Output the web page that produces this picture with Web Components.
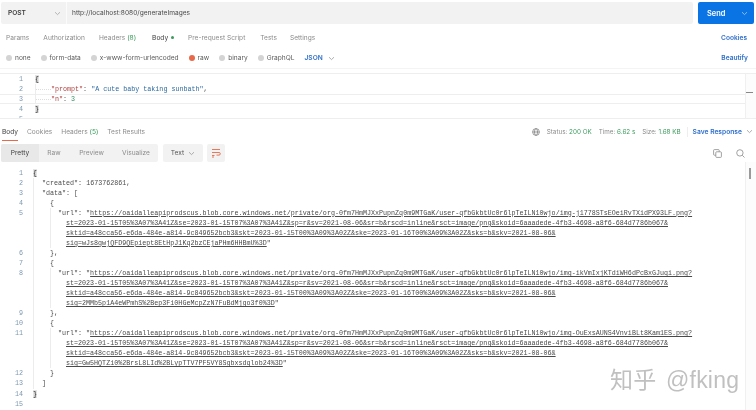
<!DOCTYPE html>
<html>
<head>
<meta charset="utf-8">
<title>Postman</title>
<style>
  html, body { margin: 0; background: #fff; }
  body { width: 756px; height: 410px; overflow: hidden; position: relative; font: 6.5px Inter, "Liberation Sans", sans-serif; color: #555; filter: blur(0.42px); }
  code-line a { color: #4a4a4a; text-decoration: underline; }
</style>
</head>
<body>
<request-bar method="POST" url="http://localhost:8080/generateImages"></request-bar>

<tab-row style="height:20px;margin-top:4px">
  <tab-item style="margin-left:6px">Params</tab-item>
  <tab-item style="margin-left:14px">Authorization</tab-item>
  <tab-item style="margin-left:14px">Headers <span style="color:#3a9a5b">(8)</span></tab-item>
  <tab-item style="margin-left:16px" active>Body <status-dot></status-dot></tab-item>
  <tab-item style="margin-left:14px">Pre-request Script</tab-item>
  <tab-item style="margin-left:15px">Tests</tab-item>
  <tab-item style="margin-left:13px">Settings</tab-item>
  <link-text slot="end" style="margin-right:9px">Cookies</link-text>
</tab-row>

<tab-row style="height:20px;border-bottom:1px solid #f4f4f4">
  <radio-item style="margin-left:6px">none</radio-item>
  <radio-item style="margin-left:10px">form-data</radio-item>
  <radio-item style="margin-left:10px">x-www-form-urlencoded</radio-item>
  <radio-item style="margin-left:10px" checked>raw</radio-item>
  <radio-item style="margin-left:10px">binary</radio-item>
  <radio-item style="margin-left:10px">GraphQL</radio-item>
  <link-text style="margin-left:10px">JSON <chevron-icon></chevron-icon></link-text>
  <link-text slot="end" style="margin-right:8px">Beautify</link-text>
</tab-row>

<code-panel id="req" style="height:46px;margin-top:4px;border-top:1px solid #eee;border-bottom:1px solid #eee;--code-gap:12px;--thumb-top:18px;--thumb-width:7px;--thumb-height:1px;--thumb-left:0px;--thumb-color:#888">
  <code-line n="1"><b>{</b></code-line>
  <code-line n="2" guides="1"><guide-mark></guide-mark><span class="k">"prompt"</span>: <span class="s">"A cute baby taking sunbath"</span>,</code-line>
  <code-line n="3" guides="1" active><guide-mark></guide-mark><span class="k">"n"</span>: <span class="v">3</span></code-line>
  <code-line n="4"><b>}</b></code-line>
  <code-line n="5"></code-line>
</code-panel>

<response-head></response-head>
<response-toolbar></response-toolbar>

<code-panel id="res" style="height:248px;padding-top:5.5px;--thumb-top:6px;--thumb-width:2px;--thumb-height:11px;--thumb-left:3px;--thumb-color:#9a9a9a">
  <code-line n="1"><b>{</b></code-line>
  <code-line n="2" indent="1" guides="1">"created": 1673762861,</code-line>
  <code-line n="3" indent="1" guides="1">"data": [</code-line>
  <code-line n="4" indent="2" guides="1">{</code-line>
  <code-line n="5" indent="3" guides="2">"url": "<a>https://oaidalleapiprodscus.blob.core.windows.net/private/org-0fm7HmMJXxPupnZq0m9MTGaK/user-qfbGkbtUc0r6lpTeILN10wjo/img-j1778STsEOeiRvTXidPX93LF.png?</a><span class="w"><a>st=2023-01-15T05%3A07%3A41Z&amp;se=2023-01-15T07%3A07%3A41Z&amp;sp=r&amp;sv=2021-08-06&amp;sr=b&amp;rscd=inline&amp;rsct=image/png&amp;skoid=6aaadede-4fb3-4698-a8f6-684d7786b067&amp;</a></span><span class="w"><a>sktid=a48cca56-e6da-484e-a814-9c849652bcb3&amp;skt=2023-01-15T00%3A09%3A02Z&amp;ske=2023-01-16T00%3A09%3A02Z&amp;sks=b&amp;skv=2021-08-06&amp;</a></span><span class="w"><a>sig=wJs8gwjQFD9QEpiept8EtHpJ1Kq2bzCEjaPHm6HHBmU%3D</a>"</span></code-line>
  <code-line n="6" indent="2" guides="1">},</code-line>
  <code-line n="7" indent="2" guides="1">{</code-line>
  <code-line n="8" indent="3" guides="2">"url": "<a>https://oaidalleapiprodscus.blob.core.windows.net/private/org-0fm7HmMJXxPupnZq0m9MTGaK/user-qfbGkbtUc0r6lpTeILN10wjo/img-ikVmIxjKTdiWH6dPcBxGJuqi.png?</a><span class="w"><a>st=2023-01-15T05%3A07%3A41Z&amp;se=2023-01-15T07%3A07%3A41Z&amp;sp=r&amp;sv=2021-08-06&amp;sr=b&amp;rscd=inline&amp;rsct=image/png&amp;skoid=6aaadede-4fb3-4698-a8f6-684d7786b067&amp;</a></span><span class="w"><a>sktid=a48cca56-e6da-484e-a814-9c849652bcb3&amp;skt=2023-01-15T00%3A09%3A02Z&amp;ske=2023-01-16T00%3A09%3A02Z&amp;sks=b&amp;skv=2021-08-06&amp;</a></span><span class="w"><a>sig=2MMb5p1A4eWPmhS%2Bep3Fi0HGeMcpZzN7FuBdMjgo3f0%3D</a>"</span></code-line>
  <code-line n="9" indent="2" guides="1">},</code-line>
  <code-line n="10" indent="2" guides="1">{</code-line>
  <code-line n="11" indent="3" guides="2">"url": "<a>https://oaidalleapiprodscus.blob.core.windows.net/private/org-0fm7HmMJXxPupnZq0m9MTGaK/user-qfbGkbtUc0r6lpTeILN10wjo/img-OuExsAUNS4VnviBLt8Kam1ES.png?</a><span class="w"><a>st=2023-01-15T05%3A07%3A41Z&amp;se=2023-01-15T07%3A07%3A41Z&amp;sp=r&amp;sv=2021-08-06&amp;sr=b&amp;rscd=inline&amp;rsct=image/png&amp;skoid=6aaadede-4fb3-4698-a8f6-684d7786b067&amp;</a></span><span class="w"><a>sktid=a48cca56-e6da-484e-a814-9c849652bcb3&amp;skt=2023-01-15T00%3A09%3A02Z&amp;ske=2023-01-16T00%3A09%3A02Z&amp;sks=b&amp;skv=2021-08-06&amp;</a></span><span class="w"><a>sig=Gw5HQTZi0%2BrsL8LId%2BLypTTV7PF5VY8Sgbxsdqlob24%3D</a>"</span></code-line>
  <code-line n="12" indent="2" guides="1">}</code-line>
  <code-line n="13" indent="1" guides="1">]</code-line>
  <code-line n="14"><b>}</b></code-line>
  <code-line n="15"></code-line>
</code-panel>

<water-mark>知乎 @fking</water-mark>

<script>
const chevron = `<svg width="7" height="5" viewBox="0 0 7 5" fill="none" stroke="currentColor" stroke-width=".8"><path d="M1 1.2l2.5 2.4L6 1.2"/></svg>`;

function shadow(el, html) {
  el.attachShadow({ mode: "open" }).innerHTML = html;
}

class ChevronIcon extends HTMLElement {
  connectedCallback() {
    shadow(this, `<style>:host{display:inline-flex;margin-left:4px;color:#999;vertical-align:middle}</style>${chevron}`);
  }
}

class StatusDot extends HTMLElement {
  connectedCallback() {
    shadow(this, `<style>:host{display:inline-block;width:3px;height:3px;margin-left:1px;border-radius:50%;background:#3a9a5b;vertical-align:1px}</style>`);
  }
}

class RequestBar extends HTMLElement {
  connectedCallback() {
    shadow(this, `
      <style>
        :host { display: flex; height: 22px; padding: 2px 2px 0 1px; gap: 5px; }
        .url { flex: 1; display: flex; align-items: center; background: #f2f2f2; border-radius: 2px; font-size: 6.6px; color: #4a4a4a; }
        .method { width: 62px; padding: 0 2px 0 7px; box-sizing: border-box; font-weight: 600; color: #3d3d3d; display: flex; align-items: center; justify-content: space-between; }
        .method svg { color: #a5a5a5; }
        .sep { width: 1px; align-self: stretch; background: #fbfbfb; margin: 0 5px 0 3px; }
        .send { width: 56px; display: flex; align-items: center; justify-content: space-between; box-sizing: border-box; padding: 0 6px 0 9px; background: #0b74e5; border-radius: 2px; color: #fff; font-size: 7.4px; font-weight: 600; }
        .send svg { color: #a9cff6; }
      </style>
      <div class="url">
        <div class="method">${this.getAttribute("method")}${chevron}</div>
        <div class="sep"></div>
        <div>${this.getAttribute("url")}</div>
      </div>
      <div class="send">Send${chevron}</div>`);
  }
}

class TabRow extends HTMLElement {
  connectedCallback() {
    shadow(this, `
      <style>
        :host { display: flex; align-items: center; }
        .end { margin-left: auto; display: flex; }
      </style>
      <slot></slot><div class="end"><slot name="end"></slot></div>`);
  }
}

class TabItem extends HTMLElement {
  connectedCallback() {
    shadow(this, `
      <style>
        :host { display: block; position: relative; white-space: nowrap; color: #8b8b8b; font-size: 6.6px; }
        :host([active]) { color: #3c3c3c; }
        :host([underline])::after { content: ""; position: absolute; left: 0; right: 0; bottom: -5px; height: 1px; background: #e8694a; }
      </style>
      <slot></slot>`);
  }
}

class LinkText extends HTMLElement {
  connectedCallback() {
    shadow(this, `<style>:host{display:block;white-space:nowrap;color:#2f6fc9;font-weight:600;font-size:6.6px}</style><slot></slot>`);
  }
}

class RadioItem extends HTMLElement {
  connectedCallback() {
    shadow(this, `
      <style>
        :host { display: flex; align-items: center; gap: 3px; white-space: nowrap; color: #5a5a5a; font-size: 6.6px; }
        i { width: 6px; height: 6px; border-radius: 50%; background: #d4d4d4; }
        :host([checked]) i { background: #e8694a; }
      </style>
      <i></i><slot></slot>`);
  }
}

class GuideMark extends HTMLElement {
  connectedCallback() {
    shadow(this, `<style>:host{display:inline-block;width:16px;height:1px;vertical-align:middle;border-bottom:1px dotted #ddd;box-sizing:border-box}</style>`);
  }
}

class CodePanel extends HTMLElement {
  connectedCallback() {
    shadow(this, `
      <style>
        :host { display: block; position: relative; box-sizing: border-box; overflow: hidden; font: 6.7px/10.05px "Liberation Mono", monospace; color: #4c4c4c; }
        .bar { position: absolute; top: 0; bottom: 0; right: 0; width: 10px; border-left: 1px solid #f0f0f0; background: #fcfcfc; }
        .thumb { position: absolute; left: var(--thumb-left); top: var(--thumb-top); width: var(--thumb-width); height: var(--thumb-height); background: var(--thumb-color); }
      </style>
      <slot></slot><div class="bar"><div class="thumb"></div></div>`);
  }
}

class CodeLine extends HTMLElement {
  connectedCallback() {
    const indent = Number(this.getAttribute("indent") || 0);
    const count = Number(this.getAttribute("guides") || 0);
    let guides = "";
    if (count > 0) guides += `<u style="left:0"></u>`;
    if (count > 1) guides += `<u style="left:17px"></u>`;
    shadow(this, `
      <style>
        :host { display: flex; white-space: pre; }
        :host([active]) { box-shadow: inset 0 1px #eee, inset 0 -1px #eee; }
        .n { width: 23px; text-align: right; color: #7d98b0; flex: none; }
        .c { position: relative; margin-left: var(--code-gap, 10px); padding-left: ${indent * 8 + (indent ? 1 : 0)}px; flex: 1; min-width: 0; }
        u { position: absolute; top: 0; bottom: 0; width: 1px; background: #ececec; }
        ::slotted(b) { font-weight: bold; background: #e4e4e4; color: #555; }
        ::slotted(.w) { display: block; padding-left: 8px; }
        ::slotted(.k) { color: #b0403f; }
        ::slotted(.s) { color: #2c6aa0; }
        ::slotted(.v) { color: #3a8f6a; }
      </style>
      <div class="n">${this.getAttribute("n")}</div>
      <div class="c">${guides}<slot></slot></div>`);
  }
}

class ResponseHead extends HTMLElement {
  connectedCallback() {
    shadow(this, `
      <style>
        :host { display: flex; align-items: center; height: 25px; color: #8b8b8b; font-size: 6.3px; white-space: nowrap; }
        .g { color: #3a9a5b; }
        .stat { margin-right: 7px; }
        .stat.last { margin-right: 6px; }
        .globe { margin: 0 7px 0 auto; color: #777; display: flex; }
        .sep { width: 1px; height: 10px; background: #eee; margin: 0 5px 0 0; }
        .save { color: #2f6fc9; font-weight: 600; font-size: 6.7px; }
        .end { margin-right: 3px; display: flex; align-items: center; }
      </style>
      <tab-item active underline style="margin-left:2px">Body</tab-item>
      <tab-item style="margin-left:9px">Cookies</tab-item>
      <tab-item style="margin-left:9px">Headers <span class="g">(5)</span></tab-item>
      <tab-item style="margin-left:9px">Test Results</tab-item>
      <div class="globe"><svg width="8" height="8" viewBox="0 0 8 8" fill="none" stroke="currentColor" stroke-width=".7"><circle cx="4" cy="4" r="3.4"/><ellipse cx="4" cy="4" rx="1.5" ry="3.4"/><path d="M.6 4h6.8"/></svg></div>
      <div class="stat">Status: <span class="g">200 OK</span></div>
      <div class="stat">Time: <span class="g">6.62 s</span></div>
      <div class="stat last">Size: <span class="g">1.68 KB</span></div>
      <div class="sep"></div>
      <div class="end"><span class="save">Save Response</span><chevron-icon></chevron-icon></div>`);
  }
}

class ResponseToolbar extends HTMLElement {
  connectedCallback() {
    shadow(this, `
      <style>
        :host { display: flex; align-items: stretch; height: 18px; padding-left: 1px; font-size: 6.6px; color: #8b8b8b; }
        .seg { display: flex; width: 157px; background: #f2f2f2; border-radius: 2px; align-items: center; }
        .seg div { text-align: center; flex: none; }
        .seg .on { width: 38px; align-self: stretch; display: flex; align-items: center; justify-content: center; background: #e8e8e8; color: #3c3c3c; border-radius: 2px 0 0 2px; }
        .drop { margin-left: 5px; width: 40px; background: #f2f2f2; border-radius: 2px; display: flex; align-items: center; justify-content: center; color: #555; }
        .wrap { margin-left: 4px; width: 18px; background: #f2f2f2; border-radius: 2px; display: flex; align-items: center; justify-content: center; }
        .tools { margin-left: auto; margin-right: 11px; display: flex; align-items: center; gap: 14px; color: #8a8a8a; }
      </style>
      <div class="seg"><div class="on">Pretty</div><div style="width:30px">Raw</div><div style="width:45px">Preview</div><div style="width:44px">Visualize</div></div>
      <div class="drop">Text<chevron-icon></chevron-icon></div>
      <div class="wrap"><svg width="10" height="10" viewBox="0 0 10 10" fill="none" stroke="#e8694a" stroke-width=".9"><path d="M1 1.5h8M1 4.5h7a1.2 1.2 0 0 1 0 2.6H5.5M1 7.5h2.5M1 9h2"/></svg></div>
      <div class="tools">
        <svg width="9" height="9" viewBox="0 0 9 9" fill="none" stroke="currentColor" stroke-width=".8"><rect x=".6" y=".6" width="5.6" height="5.6" rx=".8"/><rect x="2.8" y="2.8" width="5.6" height="5.6" rx=".8" fill="#fff"/></svg>
        <svg width="9" height="9" viewBox="0 0 9 9" fill="none" stroke="currentColor" stroke-width=".8"><circle cx="3.9" cy="3.9" r="3.2"/><path d="M6.3 6.3l2.2 2.2"/></svg>
      </div>`);
  }
}

class WaterMark extends HTMLElement {
  connectedCallback() {
    shadow(this, `
      <style>
        :host { position: absolute; left: 610px; top: 361px; white-space: nowrap; font: 23px "Liberation Sans", "Noto Sans CJK SC", sans-serif; word-spacing: 3px; letter-spacing: .2px; color: rgba(130,130,130,.5); }
      </style>
      <slot></slot>`);
  }
}

customElements.define("chevron-icon", ChevronIcon);
customElements.define("status-dot", StatusDot);
customElements.define("request-bar", RequestBar);
customElements.define("tab-row", TabRow);
customElements.define("tab-item", TabItem);
customElements.define("link-text", LinkText);
customElements.define("radio-item", RadioItem);
customElements.define("guide-mark", GuideMark);
customElements.define("code-panel", CodePanel);
customElements.define("code-line", CodeLine);
customElements.define("response-head", ResponseHead);
customElements.define("response-toolbar", ResponseToolbar);
customElements.define("water-mark", WaterMark);
</script>
</body>
</html>
